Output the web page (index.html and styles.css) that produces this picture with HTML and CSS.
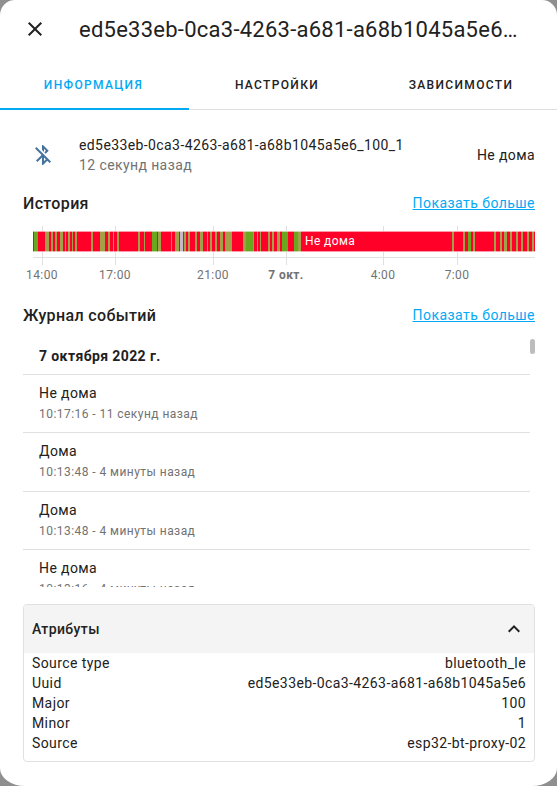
FILE: index.html
```html
<!DOCTYPE html>
<html lang="en">

<head>
  <meta charset="UTF-8">
  <meta name="viewport" content="width=device-width, initial-scale=1.0">
  <title>Entity dialog</title>
  <link rel="stylesheet" href="styles.css">
</head>

<body>
  <div class="dialog">
    <!-- Header -->
    <div class="dialog-header">
      <svg class="close-icon" viewBox="0 0 24 24"><path d="M19,6.41L17.59,5L12,10.59L6.41,5L5,6.41L10.59,12L5,17.59L6.41,19L12,13.41L17.59,19L19,17.59L13.41,12L19,6.41Z"/></svg>
      <div class="dialog-title">ed5e33eb-0ca3-4263-a681-a68b1045a5e6_100_1</div>
    </div>

    <!-- Tabs -->
    <div class="tabs">
      <div class="tab tab-active">Информация</div>
      <div class="tab">Настройки</div>
      <div class="tab">Зависимости</div>
    </div>

    <div class="content">
      <div class="state-row">
        <svg class="state-icon" viewBox="0 0 24 24"><path d="M13,5.83L14.88,7.71L13.28,9.31L14.69,10.72L17.71,7.71L12,2H11V7.03L13,9.03M5.41,4L4,5.41L10.59,12L5,17.59L6.41,19L11,14.41V22H12L16.29,17.71L18.59,20L20,18.59M13,18.17V14.41L14.88,16.29"/></svg>
        <div class="state-info">
          <div class="state-name">ed5e33eb-0ca3-4263-a681-a68b1045a5e6_100_1</div>
          <div class="state-time">12 секунд назад</div>
        </div>
        <div class="state-value">Не дома</div>
      </div>

      <!-- History -->
      <div class="section-head section-history">
        <div class="section-title">История</div>
        <a class="more-link">Показать больше</a>
      </div>
      <svg class="timeline" width="512" height="62" viewBox="23 222 512 62">
        <g class="grid">
          <path d="M42.5 226V265M115.5 226V265M213.5 226V265M286.5 226V265M383.5 226V265M457.5 226V265M33 257.5H535"/>
        </g>
        <rect class="bar-red" x="33" y="231" width="502" height="21"/>
        <g class="bar-olive">
          <rect x="45" y="231" width="4" height="21"/>
          <rect x="51" y="231" width="2" height="21"/>
          <rect x="55" y="231" width="2" height="21"/>
          <rect x="60" y="231" width="3" height="21"/>
          <rect x="65" y="231" width="1" height="21"/>
          <rect x="68" y="231" width="2" height="21"/>
          <rect x="72" y="231" width="1" height="21"/>
          <rect x="75" y="231" width="2" height="21"/>
          <rect x="91" y="231" width="2" height="21"/>
          <rect x="100" y="231" width="5" height="21"/>
          <rect x="108" y="231" width="2" height="21"/>
          <rect x="113" y="231" width="1" height="21"/>
          <rect x="117" y="231" width="2" height="21"/>
          <rect x="138" y="231" width="2" height="21"/>
          <rect x="144" y="231" width="1" height="21"/>
          <rect x="158" y="231" width="3" height="21"/>
          <rect x="171" y="231" width="1" height="21"/>
          <rect x="175" y="231" width="4" height="21"/>
          <rect x="184" y="231" width="2" height="21"/>
          <rect x="188" y="231" width="2" height="21"/>
          <rect x="195" y="231" width="2" height="21"/>
          <rect x="200" y="231" width="3" height="21"/>
          <rect x="207" y="231" width="1" height="21"/>
          <rect x="210" y="231" width="2" height="21"/>
          <rect x="215" y="231" width="2" height="21"/>
          <rect x="220" y="231" width="3" height="21"/>
          <rect x="225" y="231" width="7" height="21"/>
          <rect x="243" y="231" width="3" height="21"/>
          <rect x="253" y="231" width="1" height="21"/>
          <rect x="257" y="231" width="1" height="21"/>
          <rect x="260" y="231" width="1" height="21"/>
          <rect x="268" y="231" width="2" height="21"/>
          <rect x="272" y="231" width="2" height="21"/>
          <rect x="277" y="231" width="3" height="21"/>
          <rect x="298" y="231" width="3" height="21"/>
          <rect x="452" y="231" width="2" height="21"/>
          <rect x="463" y="231" width="2" height="21"/>
          <rect x="473" y="231" width="2" height="21"/>
          <rect x="494" y="231" width="2" height="21"/>
          <rect x="500" y="231" width="2" height="21"/>
          <rect x="504" y="231" width="3" height="21"/>
          <rect x="510" y="231" width="2" height="21"/>
          <rect x="516" y="231" width="2" height="21"/>
          <rect x="521" y="231" width="2" height="21"/>
          <rect x="527" y="231" width="2" height="21"/>
          <rect x="532" y="231" width="2" height="21"/>
        </g>
        <g class="bar-green">
          <rect x="34" y="231" width="4" height="21"/>
          <rect x="152" y="231" width="5" height="21"/>
          <rect x="246" y="231" width="7" height="21"/>
          <rect x="282" y="231" width="6" height="21"/>
          <rect x="294" y="231" width="2" height="21"/>
          <rect x="296" y="231" width="2" height="21"/>
          <rect x="468" y="231" width="3" height="21"/>
        </g>
        <rect class="bar-grey" x="180" y="231" width="3" height="21"/>
        <rect class="bar-edge" x="33" y="231" width="502" height="1"/>
        <rect class="bar-edge" x="33" y="251" width="502" height="1"/>
        <text class="bar-label" x="305" y="245">Не дома</text>
        <g class="axis-labels">
          <text x="42" y="279">14:00</text>
          <text x="115" y="279">17:00</text>
          <text x="213" y="279">21:00</text>
          <text class="axis-day" x="286" y="279">7 окт.</text>
          <text x="383" y="279">4:00</text>
          <text x="457" y="279">7:00</text>
        </g>
      </svg>

      <!-- Logbook -->
      <div class="section-head section-log">
        <div class="section-title">Журнал событий</div>
        <a class="more-link">Показать больше</a>
      </div>
      <div class="logbook">
        <div class="log-thumb"></div>
        <div class="log-date">7 октября 2022 г.</div>
        <div class="log-row">
          <div class="log-state">Не дома</div>
          <div class="log-time">10:17:16 - 11 секунд назад</div>
        </div>
        <div class="log-row">
          <div class="log-state">Дома</div>
          <div class="log-time">10:13:48 - 4 минуты назад</div>
        </div>
        <div class="log-row">
          <div class="log-state">Дома</div>
          <div class="log-time">10:13:48 - 4 минуты назад</div>
        </div>
        <div class="log-row">
          <div class="log-state">Не дома</div>
          <div class="log-time">10:13:16 - 4 минуты назад</div>
        </div>
      </div>

      <!-- Attributes -->
      <div class="attrs">
        <div class="attrs-head">
          <div class="attrs-title">Атрибуты</div>
          <svg class="chevron" viewBox="0 0 24 24"><path d="M7.41,15.41L12,10.83L16.59,15.41L18,14L12,8L6,14L7.41,15.41Z"/></svg>
        </div>
        <div class="attrs-body">
          <div class="attr-row"><span>Source type</span><span>bluetooth_le</span></div>
          <div class="attr-row"><span>Uuid</span><span>ed5e33eb-0ca3-4263-a681-a68b1045a5e6</span></div>
          <div class="attr-row"><span>Major</span><span>100</span></div>
          <div class="attr-row"><span>Minor</span><span>1</span></div>
          <div class="attr-row"><span>Source</span><span>esp32-bt-proxy-02</span></div>
        </div>
      </div>
    </div>
  </div>
</body>

</html>
```

FILE: styles.css
```css
html,
body {
  height: 100%;
}

body {
  font-family: Roboto, sans-serif;
  margin: 0;
  background: #8f8f8f;
  color: #212121;
  letter-spacing: 0.4px;
  overflow: hidden;
}

.dialog {
  height: 786px;
  background: white;
  border-radius: 15px 15px 25px 25px / 15px 15px 18px 18px;
  overflow: hidden;
}

.dialog-header {
  display: flex;
  align-items: center;
  height: 58px;
  padding: 0 30px 0 23px;
}

.close-icon {
  width: 24px;
  height: 24px;
  fill: #212121;
  flex: none;
}

.dialog-title {
  margin-left: 32px;
  font-size: 22px;
  letter-spacing: 0.25px;
  white-space: nowrap;
  overflow: hidden;
  text-overflow: ellipsis;
}

.tabs {
  display: grid;
  grid-template-columns: 189px 176px 192px;
  height: 51px;
  border-bottom: 1px solid #e0e0e0;
}

.tab {
  display: flex;
  align-items: center;
  justify-content: center;
  padding-top: 3px;
  box-sizing: border-box;
  font-size: 12px;
  font-weight: 500;
  letter-spacing: 1.35px;
  text-transform: uppercase;
}

.tab-active {
  color: #03a9f4;
  border-bottom: 2px solid #03a9f4;
  margin-bottom: -1px;
  padding-right: 2px;
}

.content {
  padding: 24px 22px 0 23px;
}

.state-row {
  display: flex;
  align-items: center;
  height: 42px;
}

.state-icon {
  width: 24px;
  height: 24px;
  margin-left: 8px;
  fill: #44739e;
  flex: none;
}

.state-info {
  flex: 1;
  margin-left: 24px;
  font-size: 14px;
  line-height: 20px;
}

.state-time {
  color: #727272;
}

.state-value {
  font-size: 14px;
}

.section-head {
  display: flex;
  justify-content: space-between;
  align-items: center;
  height: 20px;
}

.section-history {
  margin-top: 17px;
}

.section-log {
  margin-top: 21px;
}

.section-title {
  font-size: 16px;
  font-weight: 500;
  letter-spacing: 0.35px;
}

.more-link {
  font-size: 14px;
  letter-spacing: 0.45px;
  color: #03a9f4;
  text-decoration: underline;
}

.timeline {
  display: block;
  margin-top: 9px;
}

.grid path {
  fill: none;
  stroke: #e0e0e0;
}

.bar-red {
  fill: #ff0029;
}

.bar-olive rect {
  fill: #a3a04a;
}

.bar-green rect {
  fill: #6aa61e;
}

.bar-grey {
  fill: #c8b8c8;
}

.bar-edge {
  fill: white;
  opacity: 0.6;
}

.bar-label {
  font-size: 12px;
  fill: white;
}

.axis-labels text {
  font-size: 12px;
  fill: #727272;
  text-anchor: middle;
}

.axis-labels .axis-day {
  font-weight: 700;
}

.logbook {
  position: relative;
  height: 250px;
  margin-top: 12px;
  overflow: hidden;
}

.log-thumb {
  position: absolute;
  top: 2px;
  right: 0;
  width: 5px;
  height: 15px;
  border-radius: 3px;
  background: #bdbdbd;
}

.log-date {
  height: 38px;
  margin-right: 5px;
  padding-left: 16px;
  box-sizing: border-box;
  border-bottom: 1px solid #e0e0e0;
  font-size: 14px;
  font-weight: 700;
  line-height: 38px;
}

.log-row {
  height: 58.33px;
  margin-right: 5px;
  padding: 8px 0 0 16px;
  box-sizing: border-box;
  border-bottom: 1px solid #e0e0e0;
}

.log-state {
  font-size: 14px;
  line-height: 20px;
}

.log-time {
  margin-top: 1px;
  font-size: 12px;
  line-height: 20px;
  letter-spacing: 0.45px;
  color: #727272;
}

.attrs {
  margin-top: 17px;
  border: 1px solid #e0e0e0;
  border-radius: 4px;
  overflow: hidden;
}

.attrs-head {
  display: flex;
  align-items: center;
  justify-content: space-between;
  height: 48px;
  padding: 0 8px;
  background: #f4f4f4;
}

.attrs-title {
  font-size: 14px;
  font-weight: 500;
}

.chevron {
  width: 24px;
  height: 24px;
  fill: #212121;
}

.attrs-body {
  padding: 0 8px;
  margin-bottom: 8px;
}

.attr-row {
  display: flex;
  justify-content: space-between;
  font-size: 14px;
  line-height: 20px;
}
```
